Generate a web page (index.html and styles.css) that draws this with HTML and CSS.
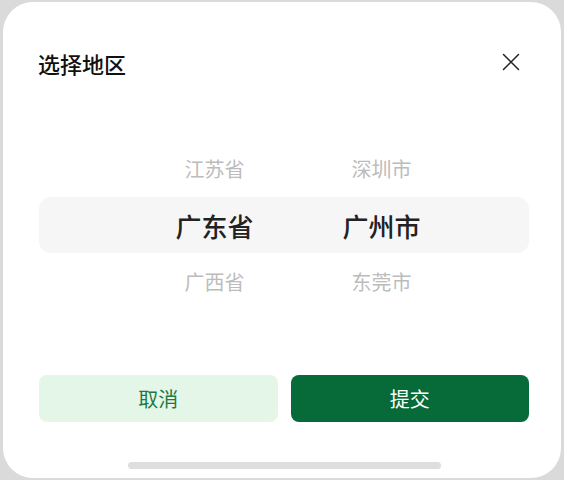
FILE: index.html
```html
<!DOCTYPE html>
<html lang="zh-CN">
<head>
<meta charset="utf-8">
<link rel="stylesheet" href="styles.css">
</head>
<body>
<div class="sheet">
  <div class="header">
    <div class="title">选择地区</div>
    <svg class="close" width="18" height="18" viewBox="0 0 18 18"><path d="M1.5 1.5 L16.5 16.5 M16.5 1.5 L1.5 16.5" stroke="#222" stroke-width="1.5" fill="none" stroke-linecap="round"/></svg>
  </div>
  <div class="picker">
    <div class="band"></div>
    <div class="cols">
      <div class="col">
        <div class="item">江苏省</div>
        <div class="item sel">广东省</div>
        <div class="item">广西省</div>
      </div>
      <div class="col">
        <div class="item">深圳市</div>
        <div class="item sel">广州市</div>
        <div class="item">东莞市</div>
      </div>
    </div>
  </div>
  <div class="actions">
    <button class="btn cancel">取消</button>
    <button class="btn submit">提交</button>
  </div>
  <div class="indicator"></div>
</div>
</body>
</html>
```
FILE: styles.css
```css
* { box-sizing: border-box; }
html, body { margin: 0; padding: 0; }
body {
  width: 564px;
  height: 480px;
  background: #dadada;
  font-family: "Noto Sans CJK SC", "Noto Sans", sans-serif;
  overflow: hidden;
}
.sheet {
  margin: 2px 3px 0 3px;
  height: 476px;
  background: #ffffff;
  border-radius: 30px;
  padding: 46px 32px 0 36px;
  display: flex;
  flex-direction: column;
}
.header {
  height: 30px;
  display: flex;
  align-items: center;
  justify-content: space-between;
}
.title {
  font-size: 22px;
  font-weight: 500;
  color: #111;
  line-height: 30px;
  margin-left: -1px;
}
.close { margin-right: 9px; margin-top: -2px; }
.picker {
  position: relative;
  margin-top: 63px;
  height: 169px;
}
.band {
  position: absolute;
  left: 0;
  right: 0;
  top: 56px;
  height: 56px;
  background: #f6f6f6;
  border-radius: 12px;
}
.cols {
  position: relative;
  display: grid;
  grid-template-columns: 167px 167px;
  padding-left: 92px;
}
.col { display: flex; flex-direction: column; align-items: center; }
.item {
  height: 56.5px;
  line-height: 56px;
  font-size: 20px;
  color: #bcbcbc;
}
.item.sel {
  font-size: 26px;
  font-weight: 500;
  color: #222;
}
.actions {
  margin-top: 65px;
  display: grid;
  grid-template-columns: 1fr 1fr;
  gap: 13px;
}
.btn {
  height: 47px;
  border: none;
  border-radius: 8px;
  font-family: inherit;
  font-size: 20px;
  font-weight: 400;
}
.cancel { background: #e4f6e8; color: #1c7a44; }
.submit { background: #076b39; color: #ffffff; }
.indicator {
  align-self: center;
  margin-top: 40px;
  margin-left: 0;
  width: 313px;
  height: 7px;
  border-radius: 4px;
  background: #dedede;
}
```
